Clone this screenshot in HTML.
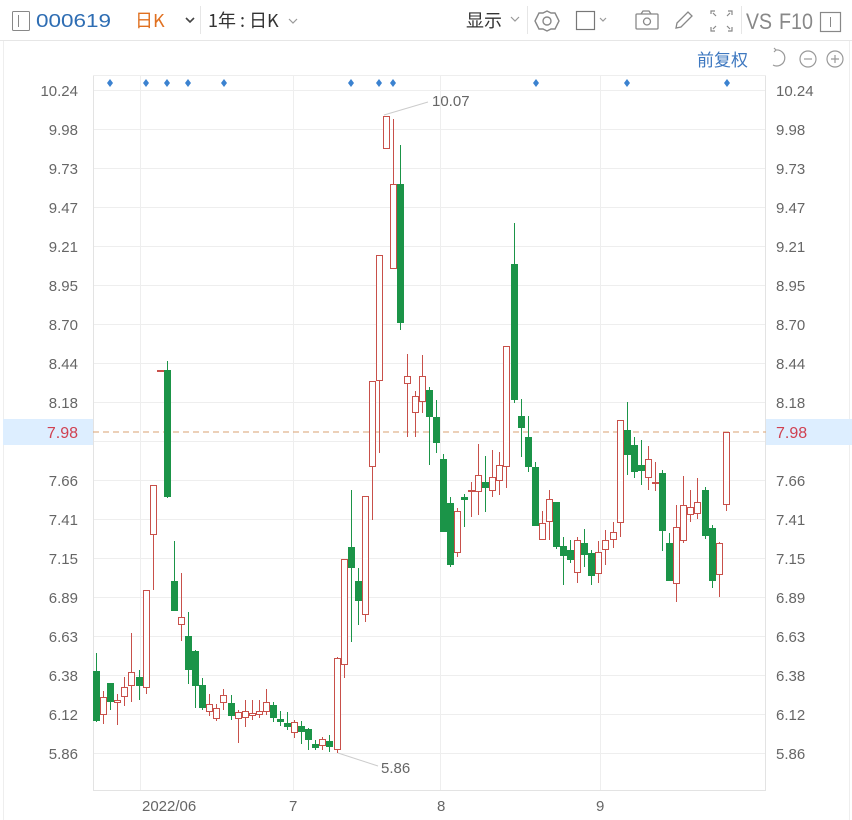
<!DOCTYPE html>
<html><head><meta charset="utf-8"><style>
html,body{margin:0;padding:0;background:#fff;width:852px;height:820px;overflow:hidden}
body{font-family:"Liberation Sans","Noto Sans CJK SC",sans-serif;position:relative}
</style></head><body>
<svg width="852" height="820" style="position:absolute;left:0;top:0" xmlns="http://www.w3.org/2000/svg" font-family="Liberation Sans, Noto Sans CJK SC, sans-serif">
<line x1="0" y1="40.5" x2="852" y2="40.5" stroke="#e6e6e6"/>
<line x1="3.5" y1="41" x2="3.5" y2="820" stroke="#eee"/>
<line x1="849.5" y1="41" x2="849.5" y2="820" stroke="#eee"/>
<line x1="200.5" y1="6" x2="200.5" y2="34" stroke="#e6e6e6"/>
<line x1="527.5" y1="6" x2="527.5" y2="34" stroke="#e6e6e6"/>
<line x1="741.5" y1="6" x2="741.5" y2="34" stroke="#e6e6e6"/>
<rect x="12.5" y="11.5" width="17" height="19" fill="none" stroke="#888" rx="1"/>
<line x1="18.5" y1="15" x2="18.5" y2="27" stroke="#888"/>
<text x="36" y="27" font-size="18" fill="#2e6db3" textLength="75" lengthAdjust="spacingAndGlyphs">000619</text>
<text x="135" y="27" font-size="18" fill="#e07020" font-family="Noto Sans CJK SC, sans-serif">日K</text>
<path d="M186 18 l4 4 l4 -4" fill="none" stroke="#444" stroke-width="1.6"/>
<text x="208" y="27" font-size="18" fill="#333" font-family="Noto Sans CJK SC, sans-serif">1年 : 日K</text>
<path d="M289 19 l4 4 l4 -4" fill="none" stroke="#999" stroke-width="1.2"/>
<text x="466" y="27" font-size="18" fill="#333" font-family="Noto Sans CJK SC, sans-serif">显示</text>
<path d="M511 17 l4 4 l4 -4" fill="none" stroke="#999" stroke-width="1.2"/>
<circle cx="547" cy="21" r="4" fill="none" stroke="#888" stroke-width="1.4"/>
<path d="M547 11 l4 2 l4 0 l2 4 l2 4 l-2 4 l-2 4 l-4 0 l-4 2 l-4 -2 l-4 0 l-2 -4 l-2 -4 l2 -4 l2 -4 l4 0 z" fill="none" stroke="#888" stroke-width="1.4"/>
<rect x="576.5" y="11.5" width="18" height="18" fill="none" stroke="#777" stroke-width="1.2"/>
<path d="M600 18 l3 3 l3 -3" fill="none" stroke="#999" stroke-width="1.2"/>
<rect x="636" y="14" width="22" height="15" fill="none" stroke="#888" stroke-width="1.3" rx="1"/>
<path d="M641 14 l2 -3 l6 0 l2 3" fill="none" stroke="#888" stroke-width="1.3"/>
<circle cx="647" cy="21.5" r="3.5" fill="none" stroke="#888" stroke-width="1.3"/>
<path d="M676 28 l1 -5 l11 -11 l4 4 l-11 11 z" fill="none" stroke="#888" stroke-width="1.3"/>
<path d="M711 14 l0 -3 l4 0 M728 11 l4 0 l0 4 M711 27 l0 4 l4 0 M732 27 l0 4 l-4 0 M713 13 l3 3 M730 13 l-3 3 M713 29 l3 -3 M730 29 l-3 -3" fill="none" stroke="#888" stroke-width="1.2"/>
<text x="746" y="29" font-size="22" fill="#888" textLength="26" lengthAdjust="spacingAndGlyphs">VS</text>
<text x="779" y="29" font-size="22" fill="#888" textLength="34" lengthAdjust="spacingAndGlyphs">F10</text>
<rect x="820.5" y="12.5" width="20" height="19" fill="none" stroke="#888" stroke-width="1.2"/>
<line x1="830.5" y1="17" x2="830.5" y2="27" stroke="#888"/>
<text x="697" y="66" font-size="17" fill="#3e78c0" font-family="Noto Sans CJK SC, sans-serif">前复权</text>
<path d="M774 52 l2 -2 l-2 -2 M776 50 a8 8 0 1 1 -3 15" fill="none" stroke="#999" stroke-width="1.2"/>
<circle cx="808" cy="59" r="8" fill="none" stroke="#999" stroke-width="1.2"/>
<line x1="804" y1="59" x2="812" y2="59" stroke="#999" stroke-width="1.2"/>
<circle cx="835" cy="59" r="8" fill="none" stroke="#999" stroke-width="1.2"/>
<path d="M831 59 h8 M835 55 v8" stroke="#999" stroke-width="1.2"/>
<g id="grid"></g>
<rect x="3" y="419" width="90" height="26" fill="#ddeeff"/>
<rect x="766" y="419" width="86" height="26" fill="#ddeeff"/>
<line x1="93" y1="432" x2="766" y2="432" stroke="#d9a070" stroke-dasharray="6,4"/>
<g id="c"></g>
<g id="lab" font-size="15" fill="#666"></g>
<line x1="384" y1="115" x2="428" y2="102" stroke="#ccc"/>
<text x="432" y="106" font-size="15" fill="#666">10.07</text>
<line x1="338" y1="753" x2="378" y2="766" stroke="#ccc"/>
<text x="381" y="773" font-size="15" fill="#666">5.86</text>
<text x="142" y="811" font-size="15" fill="#666">2022/06</text>
<text x="289" y="811" font-size="15" fill="#666">7</text>
<text x="437" y="811" font-size="15" fill="#666">8</text>
<text x="596" y="811" font-size="15" fill="#666">9</text>
</svg>
<script>
var ns="http://www.w3.org/2000/svg";
function el(p,t,a,tx){var e=document.createElementNS(ns,t);for(var k in a)e.setAttribute(k,a[k]);if(tx)e.textContent=tx;p.appendChild(e);return e;}
var g=document.getElementById('grid');
var labs=["10.24","9.98","9.73","9.47","9.21","8.95","8.70","8.44","8.18","7.92","7.66","7.41","7.15","6.89","6.63","6.38","6.12","5.86"];
var L=document.getElementById('lab');
for(var i=0;i<18;i++){var y=90+i*39;el(g,'line',{x1:93,x2:766,y1:y+.5,y2:y+.5,stroke:'#eeeeee'});
 if(i!=9){el(L,'text',{x:78,y:y+6,'text-anchor':'end'},labs[i]);el(L,'text',{x:776,y:y+6},labs[i]);}}
[140,293,440,600].forEach(function(x){el(g,'line',{x1:x+.5,x2:x+.5,y1:75,y2:790,stroke:'#eeeeee'})});
el(g,'line',{x1:93.5,x2:93.5,y1:75,y2:790,stroke:'#e3e3e3'});
el(g,'line',{x1:765.5,x2:765.5,y1:75,y2:790,stroke:'#e3e3e3'});
el(g,'line',{x1:93,x2:766,y1:790.5,y2:790.5,stroke:'#e3e3e3'});
el(g,'line',{x1:93,x2:766,y1:75.5,y2:75.5,stroke:'#eeeeee'});
el(L,'text',{x:78,y:438,'text-anchor':'end',fill:'#d04050',"font-size":16},"7.98");
el(L,'text',{x:776,y:438,fill:'#d04050',"font-size":16},"7.98");
[110,146,167,188,224,351,379,393,536,627,727].forEach(function(x){el(g,'path',{d:'M'+x+' 79 l3 4 l-3 4 l-3 -4z',fill:'#3b82d0'})});
var C=[[96,671,721,653,722,0],[103,697,715,691,724,1],[110,683,702,683,710,0],[117,700,703,694,725,1],[124,687,697,677,706,1],[131,672,686,633,702,1],[139,677,686,670,700,0],[146,590,688,590,694,1],[153,485,535,485,590,1],[160,370,371,370,371,1],[167,370,497,361,498,0],[174,581,611,541,611,0],[181,617,625,573,641,1],[188,636,670,612,684,0],[195,651,686,650,708,0],[202,685,708,678,710,0],[209,704,712,694,716,1],[216,708,719,704,721,1],[223,695,703,689,710,1],[231,703,716,695,720,0],[238,712,719,710,743,1],[245,711,718,700,727,1],[252,713,716,700,720,1],[259,711,715,700,718,1],[266,702,712,689,715,1],[273,705,718,702,722,0],[280,719,722,711,726,0],[287,723,727,712,730,0],[294,722,733,720,738,1],[301,726,732,721,744,0],[308,729,740,728,750,0],[315,744,748,740,750,0],[322,739,746,737,750,1],[329,741,747,735,752,0],[337,658,750,657,753,1],[344,559,665,559,678,1],[351,547,568,490,642,0],[358,581,601,568,625,0],[365,496,615,496,622,1],[372,381,467,381,520,1],[379,255,381,255,453,1],[386,116,149,116,149,1],[393,184,269,119,269,1],[400,184,323,145,330,0],[407,376,384,354,437,1],[415,396,413,391,437,1],[422,376,402,355,413,1],[429,390,417,387,465,0],[436,417,443,400,453,0],[443,459,532,454,532,0],[450,503,565,497,567,0],[457,511,553,508,557,1],[464,497,500,494,527,0],[471,490,492,482,517,1],[478,475,492,444,515,1],[485,482,488,456,512,0],[492,477,491,450,497,1],[499,465,481,452,495,1],[506,346,467,346,488,1],[514,264,400,223,403,0],[521,416,428,399,457,0],[528,437,467,416,472,0],[535,467,526,462,526,0],[542,523,540,511,540,1],[549,499,522,490,540,1],[556,502,547,502,549,0],[563,546,556,537,585,0],[570,550,560,540,563,0],[577,540,573,537,583,1],[584,543,555,529,567,0],[591,553,576,550,585,0],[598,552,574,541,583,1],[605,540,550,530,565,1],[613,532,540,522,548,1],[620,420,523,420,537,1],[627,430,455,402,475,0],[634,445,472,437,478,0],[641,465,471,440,485,0],[648,459,478,446,490,1],[655,482,483,462,491,1],[662,473,531,470,551,0],[669,543,581,533,581,0],[676,527,584,505,602,1],[683,505,541,476,543,1],[690,507,515,490,522,1],[697,502,514,478,519,1],[705,490,536,487,539,0],[712,528,581,525,588,0],[719,543,575,542,597,1],[726,432,505,432,511,1]];
var cg=document.getElementById('c');
C.forEach(function(c){var x=c[0],up=c[5],col=up?'#c8504a':'#1b9448';
 el(cg,'line',{x1:x+.5,x2:x+.5,y1:c[3],y2:c[4],stroke:col});
 if(up)el(cg,'rect',{x:x-2.5,y:c[1]+.5,width:6,height:Math.max(1,c[2]-c[1]-1),fill:'#fff',stroke:col});
 else el(cg,'rect',{x:x-3,y:c[1],width:7,height:Math.max(2,c[2]-c[1]),fill:col});});
</script>
</body></html>
